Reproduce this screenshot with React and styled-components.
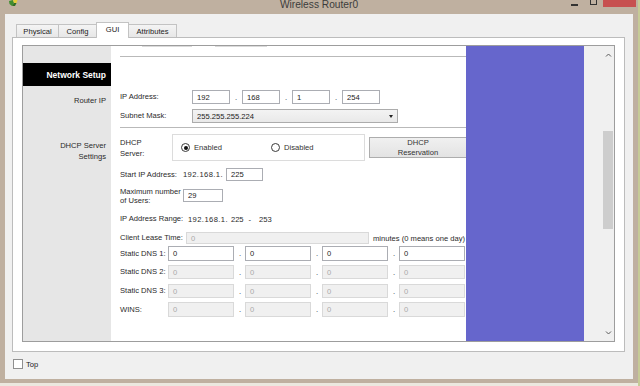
import React from 'react';
import styled, { createGlobalStyle } from 'styled-components';

const GlobalStyle = createGlobalStyle`
  * { box-sizing: border-box; }
  html, body { margin: 0; padding: 0; }
  body {
    width: 640px;
    height: 386px;
    overflow: hidden;
    font-family: "Liberation Sans", Arial, sans-serif;
    background: #ebe8df;
  }
`;

const Desktop = styled.div`
  width: 640px;
  height: 386px;
  display: flex;
  align-items: flex-start;
  background: linear-gradient(to right, transparent 638px, #c6cb96 638px), #ebe8df;
`;

const Window = styled.div`
  width: 638px;
  height: 383px;
  background: #bfb0a0;
  display: flex;
  flex-direction: column;
`;

const TitleBar = styled.div`
  height: 14px;
  flex-shrink: 0;
  display: grid;
  grid-template-columns: 1fr auto 1fr;
  align-items: start;
  overflow: hidden;
`;

const AppIcon = styled.svg`
  margin-left: 9px;
  display: block;
`;

const Title = styled.div`
  font-size: 10.2px;
  line-height: 12px;
  margin-top: -1px;
  color: #3c3c3c;
  white-space: nowrap;
`;

const Controls = styled.div`
  justify-self: end;
  display: flex;
  align-items: flex-start;
  margin-right: 2px;
`;

const MinBtn = styled.div`
  width: 7px;
  height: 2px;
  margin-top: 4px;
  background: #333;
`;

const MaxBtn = styled.div`
  width: 7px;
  height: 5px;
  margin-left: 12px;
  border: 1px solid #333;
  border-top: none;
`;

const CloseBtn = styled.div`
  width: 33px;
  height: 7px;
  margin-left: 6px;
  background: #c75050;
  overflow: hidden;
`;

const Client = styled.div`
  flex: 1;
  margin: 0 5px 4px;
  background: #f0f0f0;
  display: flex;
  flex-direction: column;
  padding: 8px 8px 0 7px;
`;

const TabRow = styled.div`
  height: 15px;
  display: flex;
  align-items: flex-end;
  padding-left: 4px;
  flex-shrink: 0;
`;

const Tab = styled.div`
  position: relative;
  z-index: ${p => (p.$active ? 1 : 0)};
  width: ${p => p.$w}px;
  height: ${p => (p.$active ? 16 : 13)}px;
  margin-bottom: ${p => (p.$active ? -1 : 0)}px;
  margin-left: -1px;
  &:first-child { margin-left: 0; }
  border: 1px solid #c3c3c3;
  border-bottom: none;
  background: ${p => (p.$active ? '#ffffff' : 'linear-gradient(#f4f4f4, #e7e7e7)')};
  font-size: 7.6px;
  color: #222;
  display: flex;
  align-items: center;
  justify-content: center;
  padding-bottom: ${p => (p.$active ? 2 : 0)}px;
`;

const Panel = styled.div`
  height: 315px;
  flex-shrink: 0;
  border: 1px solid #bcbcbc;
  background: #ffffff;
  padding: 7px 9px 9px;
`;

const Frame = styled.div`
  height: 297px;
  border: 1px solid #9d9d9d;
  display: flex;
`;

const Sidebar = styled.div`
  width: 88px;
  flex-shrink: 0;
  background: #e6e6e6;
  display: flex;
  flex-direction: column;
`;

const SectionHead = styled.div`
  margin-top: 17px;
  height: 23px;
  background: #000;
  color: #fff;
  font-weight: bold;
  font-size: 8.5px;
  display: flex;
  align-items: center;
  justify-content: flex-end;
  padding-right: 5px;
  white-space: nowrap;
`;

const SideLabel = styled.div`
  margin-top: ${p => p.$mt}px;
  font-size: 7.6px;
  line-height: 11px;
  color: #2a2a2a;
  text-align: right;
  padding-right: 5px;
  white-space: nowrap;
`;

const Content = styled.div`
  width: 355px;
  flex-shrink: 0;
  background: #fff;
  overflow: hidden;
  display: flex;
  flex-direction: column;
  padding-left: 9px;
`;

const Remnants = styled.div`
  display: flex;
  height: 1px;
  flex-shrink: 0;
`;

const RemnantSeg = styled.div`
  margin-left: ${p => p.$ml}px;
  width: ${p => p.$w}px;
  border-top: 1px solid #dadada;
`;

const Rule = styled.div`
  height: 1px;
  flex-shrink: 0;
  margin-top: ${p => p.$mt}px;
  background: #b9b9b9;
`;

const Row = styled.div`
  display: flex;
  align-items: center;
  flex-shrink: 0;
  height: ${p => p.$h}px;
  margin-top: ${p => p.$mt}px;
  white-space: nowrap;
  font-size: 7.6px;
  color: #2a2a2a;
`;

const Label = styled.div`
  width: ${p => p.$w}px;
  flex-shrink: 0;
  line-height: ${p => p.$lh || 10}px;
`;

const Value = styled.div`
  flex-shrink: 0;
  width: ${p => (p.$w ? `${p.$w}px` : 'auto')};
  margin-left: ${p => p.$ml || 0}px;
  letter-spacing: ${p => (p.$spaced ? 0.4 : 0)}px;
`;

const Field = styled.div`
  width: ${p => p.$w}px;
  height: 100%;
  flex-shrink: 0;
  border: 1px solid ${p => (p.$disabled ? '#d9d9d9' : '#abadb3')};
  background: ${p => (p.$disabled ? '#f0f0f0' : '#ffffff')};
  color: ${p => (p.$disabled ? '#a9a9a9' : '#222')};
  padding-left: 4px;
  display: flex;
  align-items: center;
`;

const Dot = styled.div`
  width: ${p => p.$w}px;
  flex-shrink: 0;
  padding-left: 5px;
  color: #333;
`;

const Select = styled.div`
  width: 206px;
  height: 100%;
  flex-shrink: 0;
  border: 1px solid #acacac;
  background: linear-gradient(#f3f3f3, #e9e9e9);
  color: #222;
  display: flex;
  align-items: center;
  justify-content: space-between;
  padding: 0 4px;
`;

const Caret = styled.div`
  width: 0;
  height: 0;
  border-left: 2.5px solid transparent;
  border-right: 2.5px solid transparent;
  border-top: 3px solid #222;
`;

const RadioGroup = styled.div`
  width: 193px;
  height: 100%;
  flex-shrink: 0;
  border: 1px solid #dcdcdc;
  display: flex;
  align-items: center;
  padding-left: 8px;
`;

const RadioOption = styled.div`
  width: ${p => (p.$w ? `${p.$w}px` : 'auto')};
  display: flex;
  align-items: center;
  gap: 4px;
  color: #333;
`;

const RadioCircle = styled.div`
  width: 9px;
  height: 9px;
  border-radius: 50%;
  border: 1px solid #3a3a3a;
  background: #fff;
  display: flex;
  align-items: center;
  justify-content: center;
  &::after {
    content: '';
    width: 4px;
    height: 4px;
    border-radius: 50%;
    background: ${p => (p.$checked ? '#111' : 'transparent')};
  }
`;

const Button = styled.div`
  width: 98px;
  height: 21px;
  flex-shrink: 0;
  margin-left: 4px;
  border: 1px solid #adadad;
  background: linear-gradient(#f0f0f0, #e3e3e3);
  color: #333;
  display: flex;
  align-items: center;
  justify-content: center;
  text-align: center;
  line-height: 10px;
`;

const Accent = styled.div`
  width: 118px;
  flex-shrink: 0;
  background: #6666cc;
`;

const Gutter = styled.div`
  width: 18px;
  flex-shrink: 0;
  background: #f0f0f0;
`;

const ScrollBar = styled.div`
  width: 12px;
  flex-shrink: 0;
  background: #f0f0f0;
  display: flex;
  flex-direction: column;
`;

const ScrollArrow = styled.div`
  height: 17px;
  flex-shrink: 0;
  display: flex;
  align-items: center;
  justify-content: center;
`;

const Track = styled.div`
  flex: 1;
`;

const Thumb = styled.div`
  margin: 0 1px;
  background: #cdcdcd;
`;

const Footer = styled.div`
  margin-top: 7px;
  padding-left: 1px;
  display: flex;
  align-items: center;
  gap: 3px;
  height: 10px;
  font-size: 7.6px;
  color: #222;
`;

const Check = styled.div`
  width: 10px;
  height: 10px;
  border: 1px solid #8f8f8f;
  background: #fff;
`;

const Chevron = ({ up }) => (
  <svg width="7" height="4" viewBox="0 0 7 4">
    <polyline
      points={up ? '1,3.5 3.5,1 6,3.5' : '1,0.5 3.5,3 6,0.5'}
      fill="none"
      stroke="#5a5a5a"
      strokeWidth="1"
    />
  </svg>
);

const Octets = ({ values, w, gap, disabled }) => (
  <>
    {values.map((v, i) => (
      <React.Fragment key={i}>
        {i > 0 && <Dot $w={gap}>.</Dot>}
        <Field $w={w} $disabled={disabled}>{v}</Field>
      </React.Fragment>
    ))}
  </>
);

const dnsRows = [
  { label: 'Static DNS 1:', mt: 2, h: 15, disabled: false },
  { label: 'Static DNS 2:', mt: 4, h: 14, disabled: true },
  { label: 'Static DNS 3:', mt: 5, h: 14, disabled: true },
  { label: 'WINS:', mt: 4, h: 15, disabled: true },
];

export default function App() {
  const thumbTop = 68;
  const thumbHeight = 98;
  return (
    <>
      <GlobalStyle />
      <Desktop>
        <Window>
          <TitleBar>
            <AppIcon width="9" height="7" viewBox="0 0 9 7">
              <path d="M0 1 L4 0 L5 3 L3 6 L0.5 4 Z" fill="#3f8d2f" />
              <path d="M4 0 L8.5 0 L7.5 3 L5 3 Z" fill="#e4cd3c" />
              <path d="M5 3 L7.5 3 L6 6 L3 6 Z" fill="#2f6d22" />
            </AppIcon>
            <Title>Wireless Router0</Title>
            <Controls>
              <MinBtn />
              <MaxBtn />
              <CloseBtn>
                <svg width="33" height="7" viewBox="0 0 33 7">
                  <line x1="11.5" y1="-4" x2="19.5" y2="4" stroke="#fff" strokeWidth="1.4" />
                  <line x1="19.5" y1="-4" x2="11.5" y2="4" stroke="#fff" strokeWidth="1.4" />
                </svg>
              </CloseBtn>
            </Controls>
          </TitleBar>
          <Client>
            <TabRow>
              <Tab $w={43}>Physical</Tab>
              <Tab $w={39}>Config</Tab>
              <Tab $w={33} $active>GUI</Tab>
              <Tab $w={49}>Attributes</Tab>
            </TabRow>
            <Panel>
              <Frame>
                <Sidebar>
                  <SectionHead>Network Setup</SectionHead>
                  <SideLabel $mt={9}>Router IP</SideLabel>
                  <SideLabel $mt={34}>
                    DHCP Server
                    <br />
                    Settings
                  </SideLabel>
                </Sidebar>
                <Content>
                  <Remnants>
                    <RemnantSeg $ml={22} $w={50} />
                    <RemnantSeg $ml={23} $w={52} />
                  </Remnants>
                  <Rule $mt={9} />
                  <Row $h={14} $mt={33}>
                    <Label $w={72}>IP Address:</Label>
                    <Octets values={['192', '168', '1', '254']} w={38} gap={12} />
                  </Row>
                  <Row $h={14} $mt={5}>
                    <Label $w={72}>Subnet Mask:</Label>
                    <Select>
                      <span>255.255.255.224</span>
                      <Caret />
                    </Select>
                  </Row>
                  <Rule $mt={4} />
                  <Row $h={27} $mt={6}>
                    <Label $w={52} $lh={11}>
                      DHCP
                      <br />
                      Server:
                    </Label>
                    <RadioGroup>
                      <RadioOption $w={90}>
                        <RadioCircle $checked />
                        <span>Enabled</span>
                      </RadioOption>
                      <RadioOption>
                        <RadioCircle />
                        <span>Disabled</span>
                      </RadioOption>
                    </RadioGroup>
                    <Button>
                      DHCP
                      <br />
                      Reservation
                    </Button>
                  </Row>
                  <Row $h={13} $mt={7}>
                    <Label $w={63}>Start IP Address:</Label>
                    <Value $w={43} $spaced>192.168.1.</Value>
                    <Field $w={37}>225</Field>
                  </Row>
                  <Row $h={13} $mt={8}>
                    <Label $w={63} $lh={9}>
                      Maximum number
                      <br />
                      of Users:
                    </Label>
                    <Field $w={40}>29</Field>
                  </Row>
                  <Row $h={12} $mt={11}>
                    <Label $w={68}>IP Address Range:</Label>
                    <Value $spaced>192.168.1.</Value>
                    <Value $ml={3}>225</Value>
                    <Value $ml={5}>-</Value>
                    <Value $ml={8}>253</Value>
                  </Row>
                  <Row $h={12} $mt={7}>
                    <Label $w={66}>Client Lease Time:</Label>
                    <Field $w={183} $disabled>0</Field>
                    <Value $ml={4}>minutes (0 means one day)</Value>
                  </Row>
                  {dnsRows.map(r => (
                    <Row key={r.label} $h={r.h} $mt={r.mt}>
                      <Label $w={48}>{r.label}</Label>
                      <Octets values={['0', '0', '0', '0']} w={66} gap={11} disabled={r.disabled} />
                    </Row>
                  ))}
                </Content>
                <Accent />
                <Gutter />
                <ScrollBar>
                  <ScrollArrow>
                    <Chevron up />
                  </ScrollArrow>
                  <Track>
                    <Thumb style={{ marginTop: thumbTop, height: thumbHeight }} />
                  </Track>
                  <ScrollArrow>
                    <Chevron />
                  </ScrollArrow>
                </ScrollBar>
              </Frame>
            </Panel>
            <Footer>
              <Check />
              <span>Top</span>
            </Footer>
          </Client>
        </Window>
      </Desktop>
    </>
  );
}
